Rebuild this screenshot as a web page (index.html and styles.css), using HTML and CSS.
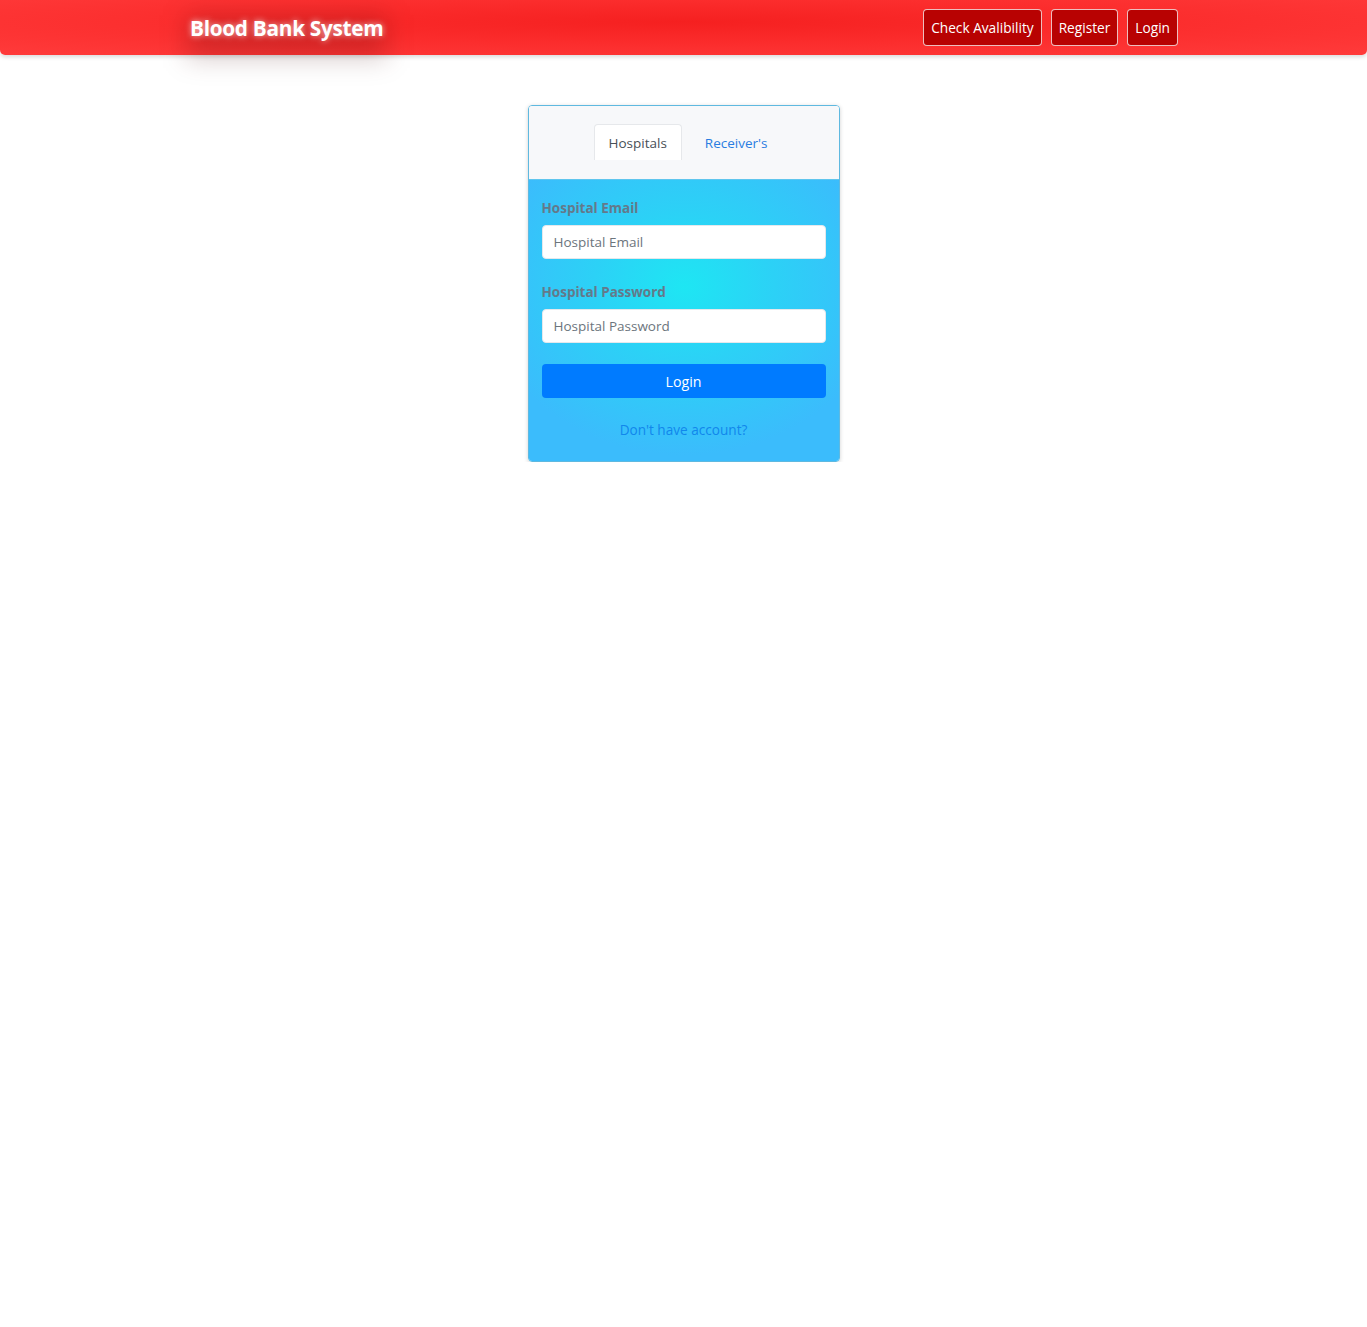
FILE: index.html
```html
<!DOCTYPE html>
<html>
<head>
<meta charset="utf-8">
<title>Blood Bank System</title>
<link rel="stylesheet" href="styles.css">
</head>
<body>
<nav class="navbar">
  <div class="nav-inner">
    <a class="brand" href="#">Blood Bank System</a>
    <div class="nav-buttons">
      <a class="nav-btn" href="#">Check Avalibility</a>
      <a class="nav-btn" href="#">Register</a>
      <a class="nav-btn" href="#">Login</a>
    </div>
  </div>
</nav>
<main class="main">
  <div class="card">
    <div class="card-header">
      <ul class="tabs">
        <li class="tab active">Hospitals</li>
        <li class="tab">Receiver's</li>
      </ul>
    </div>
    <div class="card-body">
      <label class="label">Hospital Email</label>
      <input class="input" type="text" placeholder="Hospital Email">
      <label class="label second">Hospital Password</label>
      <input class="input" type="password" placeholder="Hospital Password">
      <button class="login-btn">Login</button>
      <a class="link" href="#">Don't have account?</a>
    </div>
  </div>
</main>
</body>
</html>
```
FILE: styles.css
```css
* { box-sizing: border-box; }
body {
  margin: 0;
  font-family: "Open Sans", "Noto Sans", sans-serif;
  font-size: 13.5px;
  color: #212529;
  background: #fff;
}
.navbar {
  height: 55px;
  background: radial-gradient(ellipse at 50% 40%, #f52020 0%, #fb2c2c 45%, #ff3b3b 100%);
  border-radius: 0 0 5px 5px;
  box-shadow: 0 2px 4px rgba(0,0,0,0.15);
  position: relative;
  z-index: 1;
}
.nav-inner {
  height: 55px;
  padding: 0 189px 0 190px;
  display: flex;
  align-items: center;
  justify-content: space-between;
}
.brand {
  position: relative;
  z-index: 0;
  color: #fff;
  text-decoration: none;
  font-weight: 700;
  font-size: 20.8px;
  letter-spacing: -0.3px;
  line-height: 38px;
  height: 38px;
  margin-top: 1px;
  text-shadow: 0 0 6px rgba(255,255,255,0.75);
}
.brand::before {
  content: "";
  position: absolute;
  left: -4px;
  right: -4px;
  top: 6px;
  bottom: -12px;
  background: rgba(60,0,0,0.2);
  filter: blur(13px);
  z-index: -1;
}
.nav-buttons {
  display: flex;
  gap: 9px;
}
.nav-btn {
  display: block;
  background: #b80202;
  color: #fff;
  text-decoration: none;
  font-size: 13.7px;
  height: 37px;
  line-height: 35px;
  padding: 0 7px;
  border: 1px solid rgba(255,255,255,0.75);
  border-radius: 4px;
}
.main {
  display: flex;
  justify-content: center;
  padding-top: 50px;
}
.card {
  width: 312px;
  border: 1px solid #5fb9e0;
  border-radius: 4px;
  overflow: hidden;
  box-shadow: 0 1px 4px rgba(0,0,0,0.18);
}
.card-header {
  background: #f7f8fa;
  height: 74px;
  padding-top: 18px;
  border-bottom: 1px solid #5fc6ee;
}
.tabs {
  list-style: none;
  margin: 0;
  padding: 0 0 0 9px;
  display: flex;
  justify-content: center;
  gap: 0;
}
.tab {
  height: 36px;
  line-height: 36px;
  padding: 0 14px;
  margin: 0 4px;
  font-size: 13.5px;
  color: #2a7de1;
  border: 1px solid transparent;
  border-bottom: none;
  border-radius: 4px 4px 0 0;
}
.tab.active {
  background: #fff;
  color: #495057;
  border-color: #e6e8eb;
}
.card-body {
  background: radial-gradient(ellipse 65% 60% at 50% 38%, #1ee6f3 0%, #2cd1f6 45%, #3bbcfc 100%);
  padding: 19px 13px 22px;
  display: flex;
  flex-direction: column;
}
.label {
  font-weight: 700;
  color: #64798a;
  font-size: 13.5px;
  line-height: 18px;
  margin-bottom: 8px;
}
.label.second { margin-top: 24px; }
.input {
  height: 34px;
  border: 1px solid #e4e8ec;
  border-radius: 4px;
  padding: 0 11px;
  font-family: inherit;
  font-size: 13.5px;
  color: #495057;
  background: #fff;
}
.input::placeholder { color: #6c757d; }
.login-btn {
  margin-top: 21px;
  height: 34px;
  border: none;
  border-radius: 4px;
  background: #007bff;
  color: #fff;
  font-family: inherit;
  font-size: 14.2px;
}
.link {
  margin-top: 22px;
  text-align: center;
  color: #1187ec;
  text-decoration: none;
  font-size: 13.6px;
}
```
